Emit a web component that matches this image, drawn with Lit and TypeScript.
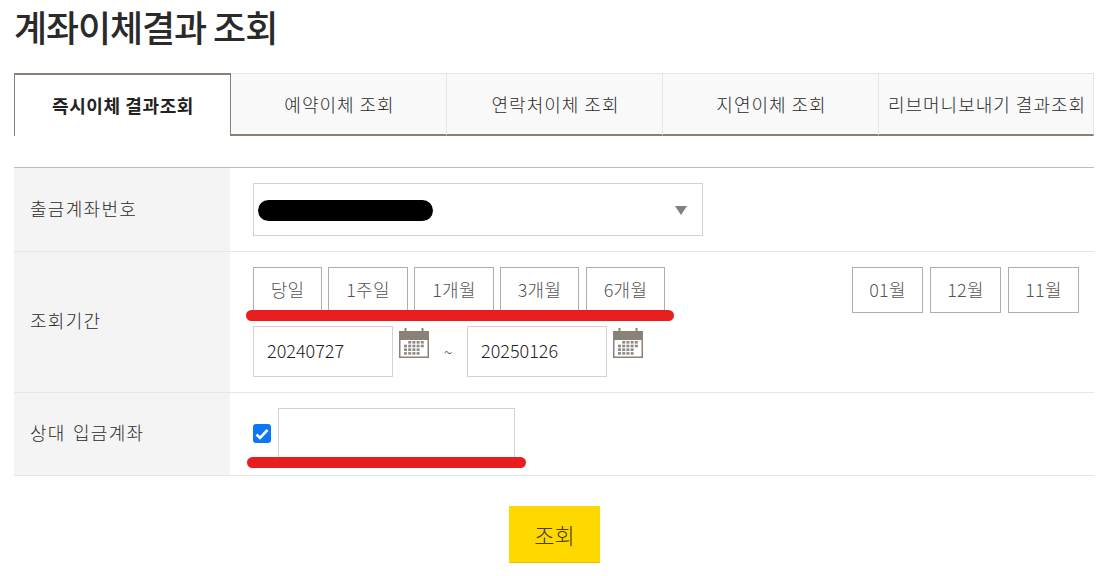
import { LitElement, html, css, svg } from "lit";
import { customElement } from "lit/decorators.js";

const dots: [number, number][] = [];
for (let r = 0; r < 4; r++) {
  for (let c = 0; c < 5; c++) {
    if ((r === 0 && c < 1) || (r === 2 && c === 4) || (r === 3 && c > 3)) continue;
    dots.push([5 + c * 4.2, 13 + r * 3.7]);
  }
}

const calendar = html`<svg class="cal" width="30" height="30" viewBox="0 0 30 30" aria-hidden="true">
  <rect x="0" y="3" width="30" height="27" fill="#8a8178"></rect>
  <rect x="5.5" y="0" width="2" height="4" fill="#8a8178"></rect>
  <rect x="22.5" y="0" width="2" height="4" fill="#8a8178"></rect>
  <rect x="1.5" y="12" width="27" height="16.5" fill="#fff"></rect>
  ${dots.map(([x, y]) => svg`<rect x=${x} y=${y} width="3" height="2.6" fill="#8f8a84"></rect>`)}
</svg>`;

@customElement("app-root")
export class AppRoot extends LitElement {
  static styles = css`
    :host {
      display: block;
      width: 1108px;
      height: 576px;
      overflow: hidden;
      background: #fff;
      color: #222;
      font-family: "Noto Sans CJK KR", "Liberation Sans", sans-serif;
      box-sizing: border-box;
      padding: 0 14px;
    }
    * { box-sizing: border-box; }
    .title {
      margin: 0;
      height: 73px;
      padding-top: 3px;
      font-size: 36px;
      line-height: 46px;
      font-weight: 500;
      letter-spacing: -1.1px;
      color: #2a2a2a;
    }
    .tabs {
      display: flex;
      width: 1080px;
      height: 63px;
    }
    .tab {
      width: 216px;
      display: flex;
      align-items: center;
      justify-content: center;
      background: #f9f9f9;
      border-top: 1px solid #e6e6e6;
      border-right: 1px solid #e6e6e6;
      border-bottom: 2px solid #8a7f75;
      font-size: 18px;
      font-weight: 300;
      letter-spacing: 1px;
      color: #2a2a2a;
      white-space: nowrap;
      padding: 0 0 1px 2px;
    }
    .tab:last-child { width: 215px; }
    .tab.active {
      width: 217px;
      background: #fff;
      border: 1px solid #8a7f75;
      border-top-width: 2px;
      border-bottom: none;
      font-weight: 700;
      letter-spacing: 0.6px;
      color: #222;
      padding: 0 0 1px 1px;
    }
    .form {
      margin-top: 31px;
      width: 1080px;
      border-top: 1px solid #bdbdbd;
    }
    .row {
      display: flex;
      border-bottom: 1px solid #e6e6e6;
    }
    .row.r1 { height: 84px; }
    .row.r2 { height: 141px; }
    .row.r3 { height: 83px; }
    .label {
      width: 216px;
      flex: none;
      background: #f4f4f4;
      display: flex;
      align-items: center;
      padding: 0 0 4px 16px;
      font-size: 18px;
      font-weight: 300;
      letter-spacing: 1.3px;
      word-spacing: 2px;
      color: #2a2a2a;
    }
    .cell {
      flex: 1;
      padding: 15px 0 0 23px;
      position: relative;
    }
    .select {
      width: 450px;
      height: 53px;
      border: 1px solid #d2d2d2;
      display: flex;
      align-items: center;
      justify-content: space-between;
      padding: 0 15px 0 4px;
      background: #fff;
    }
    .mask {
      width: 175px;
      height: 21px;
      margin-top: 1px;
      border-radius: 11px;
      background: #000;
    }
    .arrow {
      width: 0;
      height: 0;
      margin-top: 1px;
      border-left: 6px solid transparent;
      border-right: 6px solid transparent;
      border-top: 9px solid #808080;
    }
    .btn-line {
      display: flex;
      justify-content: space-between;
      width: 826px;
    }
    .group { display: flex; gap: 6px; }
    .group.months { gap: 7px; }
    .btn {
      height: 46px;
      display: flex;
      align-items: center;
      justify-content: center;
      border: 1px solid #adadad;
      background: #fff;
      font-size: 18px;
      font-weight: 300;
      letter-spacing: 0.3px;
      color: #555;
      white-space: nowrap;
      padding-bottom: 2px;
    }
    .btn.w69 { width: 69px; }
    .btn.w80 { width: 80px; }
    .btn.w79 { width: 79px; }
    .btn.w71 { width: 71px; }
    .btn.shift { margin-left: 1px; }
    .dates {
      display: flex;
      align-items: flex-start;
      margin-top: 13px;
    }
    .date {
      width: 140px;
      height: 51px;
      border: 1px solid #d2d2d2;
      display: flex;
      align-items: center;
      padding: 0 0 4px 13px;
      font-size: 18px;
      font-weight: 300;
      color: #222;
    }
    .cal { margin: 2px 0 0 6px; flex: none; }
    .tilde {
      width: 38px;
      height: 51px;
      display: flex;
      align-items: center;
      justify-content: center;
      font-size: 16px;
      font-weight: 300;
      color: #444;
    }
    .acct { display: flex; align-items: flex-start; }
    .check {
      width: 18px;
      height: 19px;
      margin: 16px 7px 0 0;
      border-radius: 3px;
      background: #0b76f6;
      display: flex;
      align-items: center;
      justify-content: center;
    }
    .acct-input {
      width: 237px;
      height: 55px;
      border: 1px solid #d2d2d2;
    }
    .red {
      position: absolute;
      background: #e81e1e;
      border-radius: 6px;
      height: 11px;
    }
    .red.a { left: 16px; top: 58px; width: 428px; }
    .red.b { left: 17px; top: 64px; width: 279px; }
    .submit-wrap {
      display: flex;
      justify-content: center;
      margin-top: 30px;
    }
    .submit {
      width: 91px;
      height: 57px;
      background: #ffd800;
      border-bottom: 1px solid #f0c000;
      display: flex;
      align-items: center;
      justify-content: center;
      font-size: 22px;
      font-weight: 300;
      color: #4a3d10;
      padding-left: 1px;
    }
  `;

  render() {
    return html`
      <h1 class="title">계좌이체결과 조회</h1>
      <div class="tabs">
        <div class="tab active">즉시이체 결과조회</div>
        <div class="tab">예약이체 조회</div>
        <div class="tab">연락처이체 조회</div>
        <div class="tab">지연이체 조회</div>
        <div class="tab">리브머니보내기 결과조회</div>
      </div>
      <div class="form">
        <div class="row r1">
          <div class="label">출금계좌번호</div>
          <div class="cell">
            <div class="select"><span class="mask"></span><span class="arrow"></span></div>
          </div>
        </div>
        <div class="row r2">
          <div class="label">조회기간</div>
          <div class="cell">
            <div class="btn-line">
              <div class="group">
                <div class="btn w69">당일</div>
                <div class="btn w80">1주일</div>
                <div class="btn w80">1개월</div>
                <div class="btn w79">3개월</div>
                <div class="btn w79 shift">6개월</div>
              </div>
              <div class="group months">
                <div class="btn w71">01월</div>
                <div class="btn w71">12월</div>
                <div class="btn w71">11월</div>
              </div>
            </div>
            <div class="dates">
              <div class="date">20240727</div>
              ${calendar}
              <div class="tilde">~</div>
              <div class="date">20250126</div>
              ${calendar}
            </div>
            <div class="red a"></div>
          </div>
        </div>
        <div class="row r3">
          <div class="label">상대 입금계좌</div>
          <div class="cell">
            <div class="acct">
              <div class="check">
                <svg width="14" height="12" viewBox="0 0 14 12" aria-hidden="true">
                  <path d="M1.5 6.5 L5 10 L12.5 2" fill="none" stroke="#fff" stroke-width="2.6"></path>
                </svg>
              </div>
              <div class="acct-input"></div>
            </div>
            <div class="red b"></div>
          </div>
        </div>
      </div>
      <div class="submit-wrap"><div class="submit">조회</div></div>
    `;
  }
}
